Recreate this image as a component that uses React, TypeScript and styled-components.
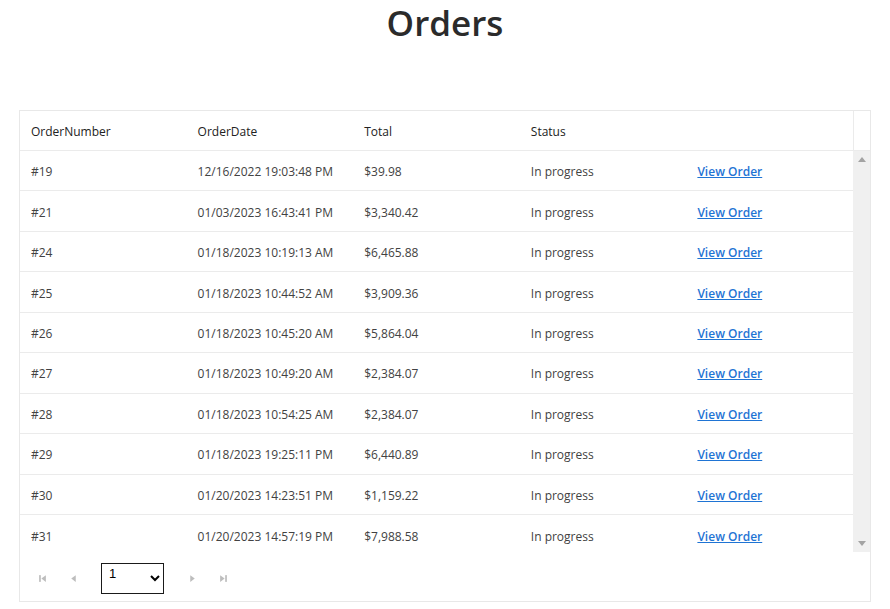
import React from "react";
import styled, { createGlobalStyle } from "styled-components";

const Global = createGlobalStyle`
  html, body { margin: 0; padding: 0; background: #fff; }
  body { font-family: "Open Sans", "Noto Sans", sans-serif; color: #424242; }
`;

const Page = styled.div`
  padding: 0 19px;
`;

const Title = styled.h1`
  margin: 0;
  padding-top: 0;
  height: 110px;
  box-sizing: border-box;
  text-align: center;
  font-size: 35px;
  font-weight: 600;
  line-height: 46px;
  color: #2b2b2b;
`;

const Grid = styled.div`
  border: 1px solid #e8e8e8;
  display: flex;
  flex-direction: column;
`;

const HeaderRow = styled.div`
  display: grid;
  grid-template-columns: repeat(5, 1fr) 17px;
  height: 39px;
  border-bottom: 1px solid #ebebeb;
`;

const HeaderCell = styled.div`
  display: flex;
  align-items: center;
  padding: 2px 11px 0;
  font-size: 12px;
  color: #222;
`;

const Spacer = styled.div`
  border-left: 1px solid #ebebeb;
`;

const BodyWrap = styled.div`
  display: flex;
  height: 405px;
  overflow: hidden;
`;

const Rows = styled.div`
  flex: 1;
  display: flex;
  flex-direction: column;
`;

const Row = styled.div<{ $last?: boolean }>`
  display: grid;
  grid-template-columns: repeat(5, 1fr);
  height: 40.45px;
  flex-shrink: 0;
  box-sizing: border-box;
  border-bottom: ${(p) => (p.$last ? "none" : "1px solid #ebebeb")};
`;

const Cell = styled.div`
  display: flex;
  align-items: center;
  padding: 2px 11px 0;
  font-size: 12px;
  color: #424242;
  white-space: nowrap;
`;

const Link = styled.a`
  color: #1f74d4;
  text-decoration: underline;
  font-size: 12px;
  font-weight: 600;
  cursor: pointer;
`;

const Scrollbar = styled.div`
  width: 17px;
  height: 401px;
  background: #f0f0f0;
  display: flex;
  flex-direction: column;
  justify-content: space-between;
  align-items: center;
  padding: 6px 0;
  box-sizing: border-box;
`;

const Arrow = styled.svg`
  width: 8px;
  height: 5px;
  display: block;
`;

const Pager = styled.div`
  height: 45px;
  display: flex;
  align-items: center;
  padding-left: 6px;
  padding-bottom: 1px;
  box-sizing: border-box;
`;

const PagerBtn = styled.button`
  width: 30px;
  height: 30px;
  border: none;
  background: transparent;
  display: flex;
  align-items: center;
  justify-content: center;
  padding: 0;
  margin: 0 0 0 1px;
`;

const PageSelect = styled.select`
  width: 63px;
  height: 31px;
  margin: 0 12px 0 13px;
  border: 1px solid #1a1a1a;
  border-radius: 0;
  background: #fff;
  font-family: "Liberation Sans", Arial, sans-serif;
  font-size: 13px;
  color: #000;
  padding: 0 2px 9px 3px;
`;

const PagerIcon = ({ kind }: { kind: "first" | "prev" | "next" | "last" }) => {
  const c = "#bdbdbd";
  return (
    <svg width="9" height="9" viewBox="0 0 8 8">
      {kind === "first" && (
        <>
          <rect x="1" y="1" width="1.5" height="6" fill={c} />
          <polygon points="7,1 7,7 3,4" fill={c} />
        </>
      )}
      {kind === "prev" && <polygon points="6,1 6,7 2,4" fill={c} />}
      {kind === "next" && <polygon points="2,1 2,7 6,4" fill={c} />}
      {kind === "last" && (
        <>
          <polygon points="1,1 1,7 5,4" fill={c} />
          <rect x="5.5" y="1" width="1.5" height="6" fill={c} />
        </>
      )}
    </svg>
  );
};

const orders = [
  ["#19", "12/16/2022 19:03:48 PM", "$39.98"],
  ["#21", "01/03/2023 16:43:41 PM", "$3,340.42"],
  ["#24", "01/18/2023 10:19:13 AM", "$6,465.88"],
  ["#25", "01/18/2023 10:44:52 AM", "$3,909.36"],
  ["#26", "01/18/2023 10:45:20 AM", "$5,864.04"],
  ["#27", "01/18/2023 10:49:20 AM", "$2,384.07"],
  ["#28", "01/18/2023 10:54:25 AM", "$2,384.07"],
  ["#29", "01/18/2023 19:25:11 PM", "$6,440.89"],
  ["#30", "01/20/2023 14:23:51 PM", "$1,159.22"],
  ["#31", "01/20/2023 14:57:19 PM", "$7,988.58"],
];

export default function App() {
  return (
    <>
      <Global />
      <Page>
        <Title>Orders</Title>
        <Grid>
          <HeaderRow>
            <HeaderCell>OrderNumber</HeaderCell>
            <HeaderCell>OrderDate</HeaderCell>
            <HeaderCell>Total</HeaderCell>
            <HeaderCell>Status</HeaderCell>
            <HeaderCell />
            <Spacer />
          </HeaderRow>
          <BodyWrap>
            <Rows>
              {orders.map((o, i) => (
                <Row key={o[0]} $last={i === orders.length - 1}>
                  <Cell>{o[0]}</Cell>
                  <Cell>{o[1]}</Cell>
                  <Cell>{o[2]}</Cell>
                  <Cell>In progress</Cell>
                  <Cell>
                    <Link>View Order</Link>
                  </Cell>
                </Row>
              ))}
            </Rows>
            <Scrollbar>
              <Arrow viewBox="0 0 8 5">
                <polygon points="0,5 8,5 4,0" fill="#a3a3a3" />
              </Arrow>
              <Arrow viewBox="0 0 8 5">
                <polygon points="0,0 8,0 4,5" fill="#a3a3a3" />
              </Arrow>
            </Scrollbar>
          </BodyWrap>
          <Pager>
            <PagerBtn><PagerIcon kind="first" /></PagerBtn>
            <PagerBtn><PagerIcon kind="prev" /></PagerBtn>
            <PageSelect defaultValue="1">
              <option value="1">1</option>
            </PageSelect>
            <PagerBtn><PagerIcon kind="next" /></PagerBtn>
            <PagerBtn><PagerIcon kind="last" /></PagerBtn>
          </Pager>
        </Grid>
      </Page>
    </>
  );
}
